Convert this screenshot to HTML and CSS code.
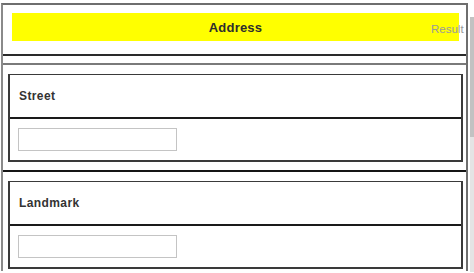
FILE: index.html
```html
<!DOCTYPE html>
<html>
<head>
<meta charset="utf-8">
<link rel="stylesheet" href="styles.css">
</head>
<body>
<div class="page">
  <div class="frame">
    <div class="header">
      <div class="title-bar">Address</div>
      <div class="result">Result</div>
    </div>
    <div class="rule-dark"></div>
    <div class="spacer"></div>
    <div class="rule-gray"></div>
    <div class="section first">
      <div class="box">
        <div class="box-label">Street</div>
        <div class="box-field"><div class="input"></div></div>
      </div>
    </div>
    <div class="rule-black"></div>
    <div class="section last">
      <div class="box">
        <div class="box-label">Landmark</div>
        <div class="box-field"><div class="input"></div></div>
      </div>
    </div>
  </div>
  <div class="scrollbar"><div class="thumb"></div></div>
</div>
</body>
</html>
```

FILE: styles.css
```css
html, body {
  margin: 0;
  padding: 0;
  background: #fff;
  overflow: hidden;
}
body {
  font-family: "Liberation Sans", Arial, sans-serif;
}
.page {
  display: flex;
  align-items: flex-start;
  height: 273px;
  padding-top: 3px;
  box-sizing: border-box;
}
.frame {
  margin-left: 1px;
  width: 463px;
  border-top: 2px solid #6e6e6e;
  border-left: 2px solid #8a8a8a;
  border-right: 2px solid #6e6e6e;
  flex: none;
}
.header {
  display: flex;
  align-items: center;
  padding: 8px 0 13px 9px;
  height: 28px;
}
.title-bar {
  width: 447px;
  height: 28px;
  background: #ffff00;
  display: flex;
  align-items: center;
  justify-content: center;
  font-weight: bold;
  font-size: 13px;
  letter-spacing: 0.2px;
  color: #2e2e2e;
  flex: none;
}
.result {
  margin-left: -28px;
  font-size: 11.5px;
  color: #9a9a9a;
  padding-top: 3px;
  white-space: nowrap;
  position: relative;
}
.rule-dark {
  height: 2px;
  background: #2a2a2a;
}
.spacer {
  height: 7px;
}
.rule-gray {
  height: 2px;
  background: #7a7a7a;
}
.section {
  padding: 9px 3px 9px 5px;
}
.section.first {
  padding-bottom: 8px;
}
.section.last {
  padding-bottom: 2px;
}
.box {
  border: 2px solid #3a3a3a;
  border-top-width: 1px;
}
.box-label {
  height: 42px;
  display: flex;
  align-items: center;
  padding-left: 9px;
  font-weight: bold;
  font-size: 12px;
  letter-spacing: 0.4px;
  color: #333;
  border-bottom: 2px solid #1a1a1a;
}
.box-field {
  padding: 9px 0 9px 8px;
}
.input {
  width: 157px;
  height: 21px;
  border: 1px solid #c4c4c4;
  background: #fff;
}
.rule-black {
  height: 2px;
  background: #151515;
}
.scrollbar {
  margin-left: 2px;
  width: 4px;
  height: 255px;
  background: #e4e4e4;
  margin-top: 14px;
  flex: none;
}
.thumb {
  height: 120px;
  background: #c2c2c2;
}
```
